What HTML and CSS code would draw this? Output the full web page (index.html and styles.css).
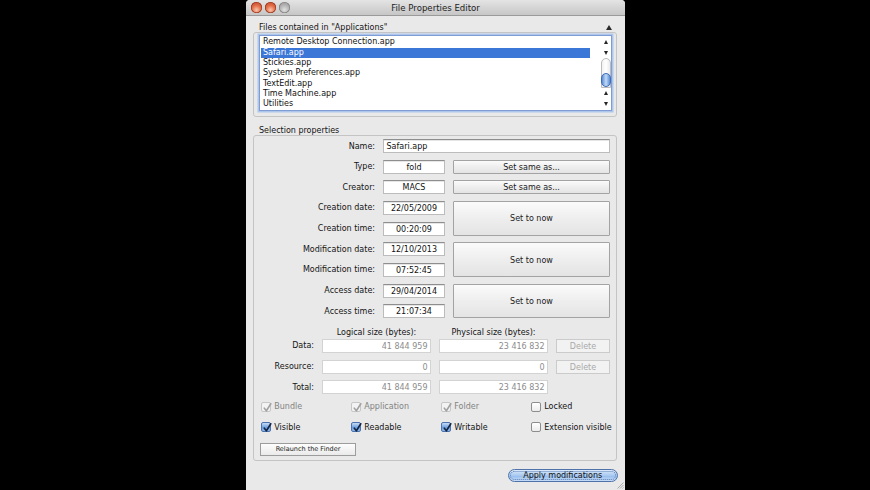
FILE: index.html
```html
<!DOCTYPE html>
<html>
<head>
<meta charset="utf-8">
<title>File Properties Editor</title>
<link rel="stylesheet" href="styles.css">
</head>
<body>
<div class="screen">
  <div class="window">
    <div class="titlebar">
      <div class="lights"><span class="light red"></span><span class="light red"></span><span class="light gray"></span></div>
      <div class="title">File Properties Editor</div>
      <div></div>
    </div>

    <div class="section-head files-head"><span>Files contained in "Applications"</span><span class="collapse"></span></div>
    <div class="group files">
      <div class="list">
        <div class="rows">
          <div class="row">Remote Desktop Connection.app</div>
          <div class="row sel">Safari.app</div>
          <div class="row">Stickies.app</div>
          <div class="row">System Preferences.app</div>
          <div class="row">TextEdit.app</div>
          <div class="row">Time Machine.app</div>
          <div class="row">Utilities</div>
        </div>
        <div class="scrollbar">
          <div class="arrow"><span class="tri up"></span></div>
          <div class="arrow"><span class="tri down"></span></div>
          <div class="track"><div class="thumb"></div></div>
          <div class="arrow"><span class="tri up"></span></div>
          <div class="arrow"><span class="tri down"></span></div>
        </div>
      </div>
    </div>

    <div class="section-head sel-head"><span>Selection properties</span></div>
    <div class="group props">
      <div class="prop-grid">
        <div class="lbl">Name:</div><div class="field left wide">Safari.app</div>
        <div class="lbl">Type:</div><div class="field">fold</div><div class="btn">Set same as...</div>
        <div class="lbl">Creator:</div><div class="field">MACS</div><div class="btn">Set same as...</div>
        <div class="lbl">Creation date:</div><div class="field">22/05/2009</div><div class="btn tall">Set to now</div>
        <div class="lbl">Creation time:</div><div class="field">00:20:09</div>
        <div class="lbl">Modification date:</div><div class="field">12/10/2013</div><div class="btn tall">Set to now</div>
        <div class="lbl">Modification time:</div><div class="field">07:52:45</div>
        <div class="lbl">Access date:</div><div class="field">29/04/2014</div><div class="btn tall">Set to now</div>
        <div class="lbl">Access time:</div><div class="field">21:07:34</div>
      </div>

      <div class="size-head">
        <span></span><span class="colhead">Logical size (bytes):</span><span class="colhead">Physical size (bytes):</span><span></span>
      </div>
      <div class="size-grid">
        <div class="lbl">Data:</div><div class="dfield">41 844 959</div><div class="dfield">23 416 832</div><div class="del">Delete</div>
        <div class="lbl">Resource:</div><div class="dfield">0</div><div class="dfield">0</div><div class="del">Delete</div>
        <div class="lbl">Total:</div><div class="dfield">41 844 959</div><div class="dfield">23 416 832</div><div></div>
      </div>

      <div class="check-grid">
        <div class="chk disabled"><span class="box dis"><svg viewBox="0 0 10 10"><path d="M2.3 5.2 L4.4 7.8 L8.8 0.8"/></svg></span>Bundle</div>
        <div class="chk disabled"><span class="box dis"><svg viewBox="0 0 10 10"><path d="M2.3 5.2 L4.4 7.8 L8.8 0.8"/></svg></span>Application</div>
        <div class="chk disabled"><span class="box dis"><svg viewBox="0 0 10 10"><path d="M2.3 5.2 L4.4 7.8 L8.8 0.8"/></svg></span>Folder</div>
        <div class="chk"><span class="box off"></span>Locked</div>
        <div class="chk"><span class="box on"><svg viewBox="0 0 10 10"><path d="M2.3 5.2 L4.4 7.8 L8.8 0.8"/></svg></span>Visible</div>
        <div class="chk"><span class="box on"><svg viewBox="0 0 10 10"><path d="M2.3 5.2 L4.4 7.8 L8.8 0.8"/></svg></span>Readable</div>
        <div class="chk"><span class="box on"><svg viewBox="0 0 10 10"><path d="M2.3 5.2 L4.4 7.8 L8.8 0.8"/></svg></span>Writable</div>
        <div class="chk"><span class="box off"></span>Extension visible</div>
      </div>

      <div class="relaunch">Relaunch the Finder</div>
    </div>

    <div class="bottom"><div class="apply">Apply modifications</div></div>

    <svg class="grip" viewBox="0 0 10 10"><path d="M9.5 3.5 L3.5 9.5 M9.5 6 L6 9.5 M9.5 8.5 L8.5 9.5"/></svg>
  </div>
</div>
</body>
</html>
```

FILE: styles.css
```css
* { box-sizing: border-box; }
html, body { margin: 0; padding: 0; background: #000; }
body {
  font-family: "DejaVu Sans", "Liberation Sans", sans-serif;
  font-size: 8px;
  color: #141414;
}
.screen { width: 870px; height: 490px; padding-left: 246px; overflow: hidden; }
.window {
  position: relative;
  width: 379px;
  height: 490px;
  background: #e9e9e9;
  border-radius: 4px 4px 0 0;
  overflow: hidden;
  display: flex;
  flex-direction: column;
}

/* title bar */
.titlebar {
  height: 16px;
  flex: none;
  display: grid;
  grid-template-columns: 1fr auto 1fr;
  align-items: center;
  background: linear-gradient(#e4e4e4, #c6c6c6);
  border-bottom: 1px solid #9a9a9a;
}
.lights { display: flex; gap: 3px; padding-left: 5px; }
.light { width: 11px; height: 11px; border-radius: 50%; }
.light.red {
  background: radial-gradient(circle at 50% 72%, #f9c6ad 0, #e4704b 45%, #b63b21 100%);
  box-shadow: inset 0 0 0 0.6px #8e2d16;
}
.light.gray {
  background: radial-gradient(circle at 50% 70%, #e0e0e0 0, #b2b2b2 50%, #8e8e8e 100%);
  box-shadow: inset 0 0 0 0.6px #7a7a7a;
}
.title { font-size: 8.6px; color: #222; white-space: nowrap; }

/* section heads */
.section-head {
  flex: none;
  display: flex;
  justify-content: space-between;
  align-items: flex-end;
  padding: 0 13px;
  line-height: 9px;
}
.files-head { height: 16px; }
.sel-head { height: 18px; }
.collapse {
  width: 0; height: 0;
  margin-bottom: 2px;
  border-left: 3.5px solid transparent;
  border-right: 3.5px solid transparent;
  border-bottom: 5px solid #2a2a2a;
}

/* group boxes */
.group {
  flex: none;
  margin: 0 8px 0 7px;
  border: 1px solid #c4c4c4;
  border-radius: 3px;
}
.files { padding: 2px 4px 5px 5px; }
.props { padding: 3px 6px 4.3px 0; }

/* list */
.list {
  width: 353px;
  height: 76px;
  background: #fff;
  border: 1px solid #7f9dd2;
  box-shadow: 0 0 0 1.5px #aec6ec;
  display: flex;
}
.rows { width: 329px; margin-left: 1px; padding-top: 1.2px; }
.row {
  height: 10.33px;
  line-height: 10.33px;
  padding-left: 2px;
  white-space: nowrap;
  color: #111;
}
.row.sel { background: #3b77d7; color: #fff; }
.scrollbar {
  width: 10px;
  margin-left: auto;
  display: flex;
  flex-direction: column;
  padding: 1px 0;
}
.arrow {
  height: 10.5px;
  flex: none;
  display: flex;
  align-items: center;
  justify-content: center;
}
.tri { width: 0; height: 0; border-left: 2.5px solid transparent; border-right: 2.5px solid transparent; }
.tri.up { border-bottom: 4px solid #262626; }
.tri.down { border-top: 4px solid #262626; }
.track {
  flex: 1;
  display: flex;
  flex-direction: column;
  justify-content: flex-end;
  border: 1px solid #bcbcbc;
  border-radius: 5px 5px 0 0;
  background: linear-gradient(to right, #f2f2f2, #fff 50%, #eaeaea);
}
.thumb {
  height: 14px;
  margin: 0 -1px;
  border-radius: 5px;
  border: 1px solid #3e6db6;
  background: linear-gradient(to right, #5a8cd6, #c2daf5 50%, #5a8cd6);
}

/* property grid */
.prop-grid {
  display: grid;
  grid-template-columns: 121px 62px 157px;
  column-gap: 8px;
  grid-auto-rows: 14px;
  row-gap: 6.67px;
}
.lbl { grid-column: 1; text-align: right; padding-top: 1.5px; line-height: 12.5px; white-space: nowrap; }
.field {
  grid-column: 2;
  background: #fff;
  border: 1px solid #bcbcbc;
  border-top-color: #8e8e8e;
  box-shadow: inset 0 1px 0 #e6e6e6;
  padding-top: 1px;
  line-height: 11px;
  text-align: center;
  color: #111;
  white-space: nowrap;
}
.field.left { grid-column: 2 / 4; text-align: left; padding-left: 2.5px; }
.btn {
  grid-column: 3;
  border: 1px solid #a3a3a3;
  border-radius: 1px;
  background: linear-gradient(#fbfbfb, #eeeeee 50%, #e4e4e4);
  color: #1a1a1a;
  text-align: center;
  padding-top: 1px;
  line-height: 11px;
  display: flex;
  align-items: center;
  justify-content: center;
}
.btn.tall { grid-row: span 2; }

/* size section */
.size-head, .size-grid {
  display: grid;
  grid-template-columns: 60px 109px 109px 54px;
  column-gap: 8px;
}
.size-head { margin-top: 8.4px; margin-bottom: 2.3px; height: 10px; padding-top: 1px; line-height: 9px; }
.colhead { text-align: center; white-space: nowrap; }
.size-grid { grid-auto-rows: 14px; row-gap: 6.67px; }
.size-grid .lbl { grid-column: auto; }
.dfield {
  background: #fff;
  border: 1px solid #d3d3d3;
  color: #8c8c8c;
  text-align: right;
  padding-right: 2.5px;
  padding-top: 1px;
  line-height: 11px;
}
.del {
  background: #f2f2f2;
  border: 1px solid #cbcbcb;
  color: #a9a9a9;
  text-align: center;
  padding-top: 1px;
  line-height: 11px;
}

/* checkboxes */
.check-grid {
  margin-top: 8px;
  padding-left: 7px;
  display: grid;
  grid-template-columns: repeat(4, 90px);
  grid-auto-rows: 10px;
  row-gap: 10.4px;
}
.chk { display: flex; align-items: center; gap: 3.3px; line-height: 10px; white-space: nowrap; }
.chk span + * { }
.chk.disabled { color: #838383; }
.box {
  width: 10px; height: 10px;
  flex: none;
  border-radius: 2px;
  position: relative;
  margin-top: -1px;
}
.box svg { position: absolute; left: 0; top: 0; width: 10px; height: 10px; overflow: visible; }
.box path { fill: none; stroke-width: 1.6; stroke-linecap: round; stroke-linejoin: round; }
.box.dis { border: 1px solid #c6c6c6; background: #f3f3f3; }
.box.dis path { stroke: #a2a2a2; }
.box.on { border: 1px solid #4b72ae; background: linear-gradient(#c4dbf6, #6fa1e2 55%, #8db8ec); }
.box.on path { stroke: #14243f; }
.box.off { border: 1px solid #8d8d8d; background: linear-gradient(#ffffff, #ececec); }

.relaunch {
  margin: 10.6px 0 0 6px;
  width: 96px;
  height: 12.4px;
  font-size: 6.5px;
  line-height: 10.4px;
  text-align: center;
  border: 1px solid #9c9c9c;
  background: linear-gradient(#fdfdfd, #eaeaea);
  color: #1a1a1a;
  white-space: nowrap;
}

/* bottom */
.bottom { flex: none; margin-top: 8px; display: flex; justify-content: flex-end; padding-right: 7.3px; }
.apply {
  width: 110px;
  height: 13.3px;
  border-radius: 7px;
  border: 1px solid #4f72ab;
  background: linear-gradient(#dcebfb, #a9c9f0 50%, #93bbec 51%, #c8def7);
  color: #111;
  text-align: center;
  line-height: 11.3px;
  outline: 1px dotted #5a7cb4;
  outline-offset: -3px;
  white-space: nowrap;
}
.grip { position: absolute; right: 1px; bottom: 1px; width: 10px; height: 10px; }
.grip path { stroke: #9a9a9a; stroke-width: 0.8; fill: none; }
```
